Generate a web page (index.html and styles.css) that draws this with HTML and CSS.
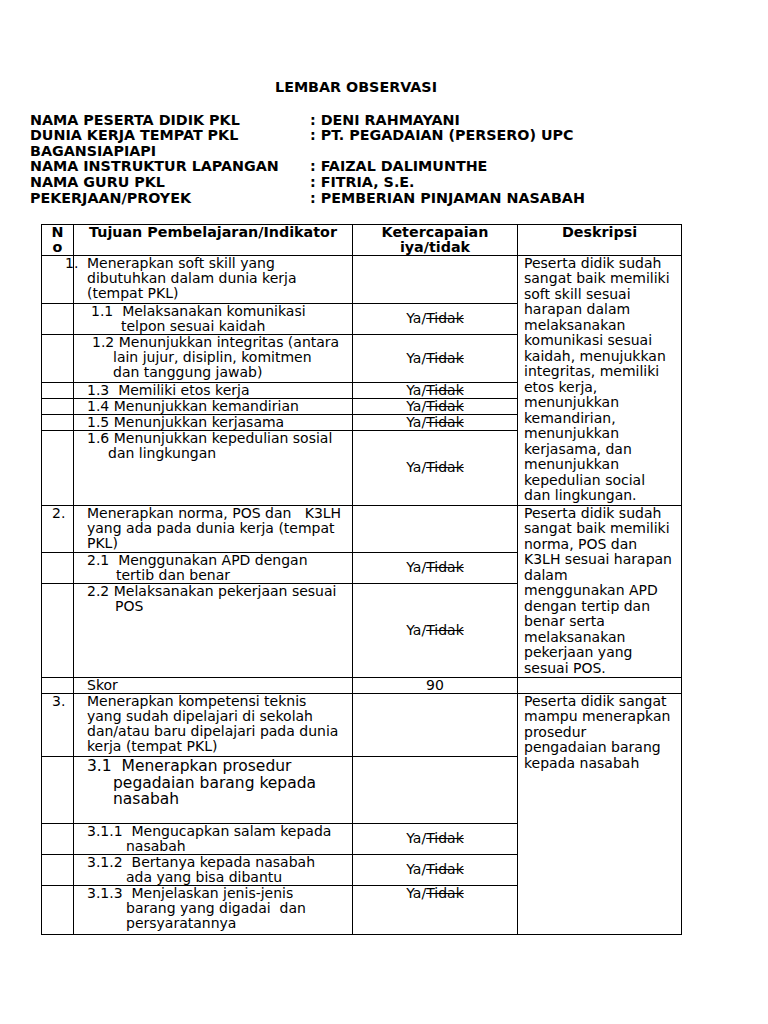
FILE: index.html
```html
<!DOCTYPE html>
<html>
<head>
<meta charset="utf-8">
<link rel="stylesheet" href="styles.css">
</head>
<body>
<div class="page">
  <h1 class="title">LEMBAR OBSERVASI</h1>
  <div class="info">
    <div class="irow"><span class="lab">NAMA PESERTA DIDIK PKL</span><span>: DENI RAHMAYANI</span></div>
    <div class="irow"><span class="lab">DUNIA KERJA TEMPAT PKL</span><span>: PT. PEGADAIAN (PERSERO) UPC</span></div>
    <div class="irow">BAGANSIAPIAPI</div>
    <div class="irow"><span class="lab">NAMA INSTRUKTUR LAPANGAN</span><span>: FAIZAL DALIMUNTHE</span></div>
    <div class="irow"><span class="lab">NAMA GURU PKL</span><span>: FITRIA, S.E.</span></div>
    <div class="irow"><span class="lab">PEKERJAAN/PROYEK</span><span>: PEMBERIAN PINJAMAN NASABAH</span></div>
  </div>
  <table class="obs">
    <colgroup><col class="c1"><col class="c2"><col class="c3"><col class="c4"></colgroup>
    <tr class="hdr">
      <th class="no">N<br>o</th>
      <th>Tujuan Pembelajaran/Indikator</th>
      <th>Ketercapaian<br>iya/tidak</th>
      <th>Deskripsi</th>
    </tr>
    <tr class="h48">
      <td></td>
      <td class="tj"><span class="num1">1.</span>Menerapkan soft skill yang<br>dibutuhkan dalam dunia kerja<br>(tempat PKL)</td>
      <td></td>
      <td class="ds" rowspan="7">Peserta didik sudah<br>sangat baik memiliki<br>soft skill sesuai<br>harapan dalam<br>melaksanakan<br>komunikasi sesuai<br>kaidah, menujukkan<br>integritas, memiliki<br>etos kerja,<br>menunjukkan<br>kemandirian,<br>menunjukkan<br>kerjasama, dan<br>menunjukkan<br>kepedulian social<br>dan lingkungan.</td>
    </tr>
    <tr class="h31">
      <td></td>
      <td class="tj"><div class="i11">1.1&nbsp; Melaksanakan komunikasi<br>telpon sesuai kaidah</div></td>
      <td class="yt">Ya/<s>Tidak</s></td>
    </tr>
    <tr class="h48">
      <td></td>
      <td class="tj"><div class="i12">1.2 Menunjukkan integritas (antara<br>lain jujur, disiplin, komitmen<br>dan tanggung jawab)</div></td>
      <td class="yt">Ya/<s>Tidak</s></td>
    </tr>
    <tr class="h16">
      <td></td>
      <td class="tj">1.3&nbsp; Memiliki etos kerja</td>
      <td class="yt">Ya/<s>Tidak</s></td>
    </tr>
    <tr class="h16">
      <td></td>
      <td class="tj">1.4 Menunjukkan kemandirian</td>
      <td class="yt">Ya/<s>Tidak</s></td>
    </tr>
    <tr class="h16">
      <td></td>
      <td class="tj">1.5 Menunjukkan kerjasama</td>
      <td class="yt">Ya/<s>Tidak</s></td>
    </tr>
    <tr class="h75">
      <td></td>
      <td class="tj"><div class="i16">1.6 Menunjukkan kepedulian sosial<br>dan lingkungan</div></td>
      <td class="yt">Ya/<s>Tidak</s></td>
    </tr>
    <tr class="h47">
      <td class="no2">2.</td>
      <td class="tj">Menerapkan norma, POS dan&nbsp;&nbsp; K3LH<br>yang ada pada dunia kerja (tempat<br>PKL)</td>
      <td></td>
      <td class="ds" rowspan="3">Peserta didik sudah<br>sangat baik memiliki<br>norma, POS dan<br>K3LH sesuai harapan<br>dalam<br>menggunakan APD<br>dengan tertip dan<br>benar serta<br>melaksanakan<br>pekerjaan yang<br>sesuai POS.</td>
    </tr>
    <tr class="h31">
      <td></td>
      <td class="tj"><div class="i21">2.1&nbsp; Menggunakan APD dengan<br>tertib dan benar</div></td>
      <td class="yt">Ya/<s>Tidak</s></td>
    </tr>
    <tr class="h94">
      <td></td>
      <td class="tj"><div class="i22">2.2 Melaksanakan pekerjaan sesuai<br>POS</div></td>
      <td class="yt">Ya/<s>Tidak</s></td>
    </tr>
    <tr class="h16">
      <td></td>
      <td class="tj">Skor</td>
      <td class="yt">90</td>
      <td></td>
    </tr>
    <tr class="h63">
      <td class="no2">3.</td>
      <td class="tj">Menerapkan kompetensi teknis<br>yang sudah dipelajari di sekolah<br>dan/atau baru dipelajari pada dunia<br>kerja (tempat PKL)</td>
      <td></td>
      <td class="ds" rowspan="5">Peserta didik sangat<br>mampu menerapkan<br>prosedur<br>pengadaian barang<br>kepada nasabah</td>
    </tr>
    <tr class="h67">
      <td></td>
      <td class="tj big"><div class="i31">3.1&nbsp; Menerapkan prosedur<br>pegadaian barang kepada<br>nasabah</div></td>
      <td></td>
    </tr>
    <tr class="h31">
      <td></td>
      <td class="tj"><div class="i311">3.1.1&nbsp; Mengucapkan salam kepada<br>nasabah</div></td>
      <td class="yt">Ya/<s>Tidak</s></td>
    </tr>
    <tr class="h31">
      <td></td>
      <td class="tj"><div class="i311">3.1.2&nbsp; Bertanya kepada nasabah<br>ada yang bisa dibantu</div></td>
      <td class="yt">Ya/<s>Tidak</s></td>
    </tr>
    <tr class="h49">
      <td></td>
      <td class="tj"><div class="i311">3.1.3&nbsp; Menjelaskan jenis-jenis<br>barang yang digadai&nbsp; dan<br>persyaratannya</div></td>
      <td class="yt top">Ya/<s>Tidak</s></td>
    </tr>
  </table>
</div>
</body>
</html>
```

FILE: styles.css
```css
html, body {
  margin: 0;
  padding: 0;
  background: #fff;
}
body {
  font-family: "DejaVu Sans", sans-serif;
  font-size: 14px;
  line-height: 15.6px;
  color: #000;
}
.page {
  padding: 79px 0 0 30px;
}
.title {
  margin: 0 0 17.7px 0;
  font-size: 14.3px;
  line-height: 16px;
  font-weight: bold;
  text-align: center;
  width: 652px;
}
.info {
  font-weight: bold;
  font-size: 14.3px;
  margin-bottom: 17.7px;
}
.irow {
  height: 15.6px;
  white-space: nowrap;
}
.lab {
  display: inline-block;
  width: 280px;
}
table.obs {
  border-collapse: collapse;
  table-layout: fixed;
  width: 641px;
  margin-left: 11px;
  line-height: 15px;
}
.c1 { width: 32px; }
.c2 { width: 279px; }
.c3 { width: 165px; }
.c4 { width: 164px; }
.obs th, .obs td {
  border: 1px solid #000;
  padding: 0;
  vertical-align: top;
  white-space: nowrap;
}
.obs th {
  font-weight: bold;
  font-size: 14.3px;
  text-align: center;
}
.hdr { height: 31px; }
.h16 { height: 16px; }
.h31 { height: 31px; }
.h47 { height: 47px; }
.h48 { height: 48px; }
.h49 { height: 49px; }
.h63 { height: 63px; }
.h67 { height: 67px; }
.h75 { height: 75px; }
.h94 { height: 94px; }
.obs td.tj {
  padding-left: 13px;
  vertical-align: top;
}
.obs td.yt {
  text-align: center;
  vertical-align: middle;
}
.obs td.top { vertical-align: top; }
.obs td.ds {
  padding-left: 6px;
  line-height: 15.5px;
  vertical-align: top;
}
.obs td.no2 {
  padding-left: 10px;
}
.num1 {
  display: inline-block;
  width: 22px;
  margin-left: -22px;
}
.i11 { padding-left: 34px; text-indent: -30px; }
.i12 { padding-left: 26px; text-indent: -21px; }
.i16 { padding-left: 21px; text-indent: -21px; }
.i21 { padding-left: 29px; text-indent: -29px; }
.i22 { padding-left: 28px; text-indent: -28px; }
.i31 { padding-left: 26px; text-indent: -26px; }
.i311 { padding-left: 39px; text-indent: -39px; }
.obs td.big {
  font-size: 15.5px;
  line-height: 16.7px;
  padding-top: 1px;
}
s { text-decoration: line-through; }
```
